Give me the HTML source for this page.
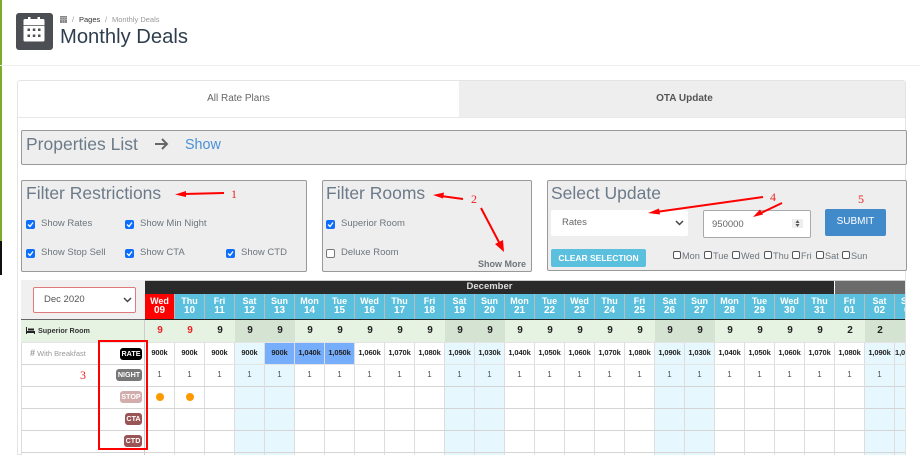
<!DOCTYPE html>
<html><head><meta charset="utf-8"><style>
*{box-sizing:border-box}
html,body{margin:0;padding:0;background:#fff;width:920px;height:455px;overflow:hidden}
#w{position:absolute;left:0;top:0;width:920px;height:455px;overflow:hidden;font-family:"Liberation Sans",sans-serif;color:#6c757d;filter:blur(.3px)}
.a{position:absolute}
.box{position:absolute;background:#eee;border:1px solid #999;border-radius:2px}
.h{position:absolute;font-size:17.5px;color:#6c7a89;white-space:nowrap;line-height:20px}
.l{position:absolute;font-size:9.5px;line-height:12px;color:#6c757d;white-space:nowrap}
.c{position:absolute;width:9px;height:9px;border-radius:2px;background:#0d6efd}
.c svg{position:absolute;left:0;top:0}
.u{position:absolute;width:9px;height:9px;border-radius:2px;background:#fff;border:1px solid #777}
.r{position:absolute;left:145px;width:760px;display:flex;overflow:hidden}
.r i{flex:0 0 30px;width:30px;font-style:normal;text-align:center;border-right:1px solid #ddd;white-space:nowrap;overflow:hidden}
.d i{height:25px;background:#5bc0de;color:#fff;font-weight:bold;font-size:9px;line-height:10px;padding-top:2px;border-right:1px solid #bbb}
.d b{display:block;font-size:10px}
.v i{height:22px;background:#e6f3e2;color:#222;font-weight:bold;font-size:10px;line-height:21px;border-right:0}
.v i.w{background:#d5e3d3}
.v i.e{color:#e22}
.t i{height:21px;background:#fff;color:#222;font-size:7.5px;font-weight:bold;line-height:20px;letter-spacing:-.1px}
.n i{height:22px;background:#fff;color:#555;font-size:8px;line-height:19px;border-bottom:1px solid #d4d4d4}
.t i.w,.n i.w{background:#e6f7fd}
.t i.p{background:#77aefb}
.f{position:absolute;left:21px;width:124px;height:22px;background:#fff;border-bottom:1px solid #d4d4d4;border-left:1px solid #ddd;border-right:1px solid #ccc}
.g{position:absolute;right:2px;font-size:7.2px;font-weight:bold;color:#fff;border-radius:3px;text-align:center;height:12px;line-height:12px}
.o{position:absolute;width:8px;height:8px;border-radius:50%;background:#f90}
.x{position:absolute;font-family:"Liberation Serif",serif;font-size:12px;color:#e22;line-height:14px}
</style></head><body><div id="w">
<div class="a" style="left:0;top:0;width:2px;height:241px;background:#7aad2a"></div>
<div class="a" style="left:0;top:241px;width:2px;height:34px;background:#111"></div>
<div class="a" style="left:0;top:65px;width:920px;height:1px;background:#eee"></div>

<div class="a" style="left:16px;top:13px;width:37px;height:37px;background:#4b4e52;border-radius:3px"></div>
<svg class="a" style="left:22px;top:16px" width="24" height="26" viewBox="0 0 24 26"><path fill="#fff" d="M6 1h2.500v3H6zM15.500 1H18v3h-2.500z"/><path fill="#fff" d="M3 3h18a1.500 1.500 0 0 1 1.500 1.500V24a1.500 1.500 0 0 1-1.500 1.500H3A1.500 1.500 0 0 1 1.500 24V4.500A1.500 1.500 0 0 1 3 3z"/><path fill="#4b4e52" d="M1.500 9h21v.7h-21z"/><path fill="#4b4e52" d="M5.500 12.500h2.500v2.500H5.500zM10.800 12.500h2.500v2.500h-2.500zM16 12.500h2.500v2.500H16zM5.500 18.500h2.500v2.500H5.500zM10.800 18.500h2.500v2.500h-2.500zM16 18.500h2.500v2.500H16z"/></svg>
<svg class="a" style="left:60px;top:15px" width="7" height="8" viewBox="0 0 7 8"><path fill="#888" d="M0 1h7v7H0z"/><path fill="#ccc" d="M0 2.500h7v.5H0zM0 4.500h7v.5H0zM2 3v5h.5V3zM4.500 3v5h.5V3z"/></svg>
<div class="l" style="left:72px;top:14px;font-size:7.5px;color:#999">/</div>
<div class="l" style="left:79px;top:14px;font-size:7.5px;color:#333">Pages</div>
<div class="l" style="left:105px;top:14px;font-size:7.5px;color:#999">/</div>
<div class="l" style="left:112px;top:14px;font-size:7.5px;color:#999">Monthly Deals</div>
<div class="a" style="left:60px;top:25px;font-size:20.2px;line-height:24px;color:#2f3e4e;white-space:nowrap">Monthly Deals</div>

<div class="a" style="left:17px;top:80px;width:889px;height:375px;background:#fff;border:1px solid #e4e4e4;border-radius:3px 3px 0 0"></div>
<div class="a" style="left:459px;top:81px;width:446px;height:36px;background:#eee"></div>
<div class="a" style="left:18px;top:117px;width:887px;height:1px;background:#e8e8e8"></div>
<div class="a" style="left:18px;top:81px;width:441px;height:36px;line-height:35px;text-align:center;font-size:10px;color:#666">All Rate Plans</div>
<div class="a" style="left:459px;top:81px;width:446px;height:36px;line-height:35px;text-align:center;font-size:10px;color:#555;font-weight:bold;padding-left:5px">OTA Update</div>

<div class="box" style="left:21px;top:130px;width:886px;height:35px"></div>
<div class="h" style="left:26px;top:134px">Properties List</div>
<svg class="a" style="left:154px;top:137px" width="15" height="14" viewBox="0 0 15 14"><path fill="none" stroke="#666" stroke-width="2" d="M1 7h12M8 2l5 5-5 5"/></svg>
<div class="a" style="left:185px;top:137px;font-size:14.3px;line-height:17px;color:#4a90d6">Show</div>

<div class="box" style="left:21px;top:180px;width:286px;height:92px"></div>
<div class="h" style="left:26px;top:183px">Filter Restrictions</div>
<div class="c" style="left:26px;top:220px"><svg width="9" height="9"><path d="M2 4.500l2 2 3-4" fill="none" stroke="#fff" stroke-width="1.300"/></svg></div>
<div class="l" style="left:41px;top:218px">Show Rates</div>
<div class="c" style="left:125px;top:220px"><svg width="9" height="9"><path d="M2 4.500l2 2 3-4" fill="none" stroke="#fff" stroke-width="1.300"/></svg></div>
<div class="l" style="left:140px;top:218px">Show Min Night</div>
<div class="c" style="left:26px;top:249px"><svg width="9" height="9"><path d="M2 4.500l2 2 3-4" fill="none" stroke="#fff" stroke-width="1.300"/></svg></div>
<div class="l" style="left:41px;top:247px">Show Stop Sell</div>
<div class="c" style="left:125px;top:249px"><svg width="9" height="9"><path d="M2 4.500l2 2 3-4" fill="none" stroke="#fff" stroke-width="1.300"/></svg></div>
<div class="l" style="left:140px;top:247px">Show CTA</div>
<div class="c" style="left:226px;top:249px"><svg width="9" height="9"><path d="M2 4.500l2 2 3-4" fill="none" stroke="#fff" stroke-width="1.300"/></svg></div>
<div class="l" style="left:241px;top:247px">Show CTD</div>

<div class="box" style="left:322px;top:180px;width:210px;height:92px"></div>
<div class="h" style="left:326px;top:183px">Filter Rooms</div>
<div class="c" style="left:326px;top:220px"><svg width="9" height="9"><path d="M2 4.500l2 2 3-4" fill="none" stroke="#fff" stroke-width="1.300"/></svg></div>
<div class="l" style="left:341px;top:218px">Superior Room</div>
<div class="u" style="left:326px;top:249px"></div>
<div class="l" style="left:341px;top:247px">Deluxe Room</div>
<div class="l" style="left:478px;top:258px;font-weight:bold;font-size:9px">Show More</div>

<div class="box" style="left:547px;top:180px;width:360px;height:91px"></div>
<div class="h" style="left:551px;top:183px">Select Update</div>
<div class="a" style="left:551px;top:210px;width:137px;height:26px;background:#fff;border-radius:2px;font-size:9.5px;line-height:26px;padding-left:11px;color:#666">Rates</div>
<svg class="a" style="left:675px;top:220px" width="9" height="6"><path d="M1 1l3.500 3.500L8 1" fill="none" stroke="#444" stroke-width="1.500"/></svg>
<div class="a" style="left:703px;top:210px;width:108px;height:28px;background:#fff;border:1px solid #aaa;border-radius:2px;font-size:9.5px;line-height:27px;padding-left:8px;color:#666">950000</div>
<div class="a" style="left:792px;top:219px;width:11px;height:9px;background:#eee"></div>
<svg class="a" style="left:795px;top:220px" width="5" height="7"><path d="M2.500 0l2 3H.5zM2.500 7l2-3H.5z" fill="#555"/></svg>
<div class="a" style="left:825px;top:209px;width:61px;height:27px;background:#428bca;border-radius:2px;color:#fff;font-size:10px;line-height:26px;text-align:center">SUBMIT</div>
<div class="a" style="left:551px;top:249px;width:95px;height:18px;background:#5bc0de;border-radius:2px;color:#fff;font-size:8.5px;font-weight:bold;line-height:18px;text-align:center">CLEAR SELECTION</div>
<div class="u" style="left:673px;top:251px;width:8px;height:8px;border-color:#555"></div><div class="l" style="left:682px;top:250px;font-size:9.2px">Mon</div>
<div class="u" style="left:704px;top:251px;width:8px;height:8px;border-color:#555"></div><div class="l" style="left:713px;top:250px;font-size:9.2px">Tue</div>
<div class="u" style="left:732px;top:251px;width:8px;height:8px;border-color:#555"></div><div class="l" style="left:741px;top:250px;font-size:9.2px">Wed</div>
<div class="u" style="left:764px;top:251px;width:8px;height:8px;border-color:#555"></div><div class="l" style="left:773px;top:250px;font-size:9.2px">Thu</div>
<div class="u" style="left:792px;top:251px;width:8px;height:8px;border-color:#555"></div><div class="l" style="left:801px;top:250px;font-size:9.2px">Fri</div>
<div class="u" style="left:816px;top:251px;width:8px;height:8px;border-color:#555"></div><div class="l" style="left:825px;top:250px;font-size:9.2px">Sat</div>
<div class="u" style="left:842px;top:251px;width:8px;height:8px;border-color:#555"></div><div class="l" style="left:851px;top:250px;font-size:9.2px">Sun</div>

<!-- grid -->
<div class="a" style="left:21px;top:280px;width:124px;height:39px;background:#f0f0f0"></div>
<div class="a" style="left:21px;top:319px;width:124px;height:1px;background:#666"></div>
<div class="a" style="left:33px;top:287px;width:103px;height:26px;background:#fff;border:1px solid #e07a7a;border-radius:2px;font-size:9.5px;line-height:24px;padding-left:10px;color:#555">Dec 2020</div>
<svg class="a" style="left:123px;top:297px" width="9" height="6"><path d="M1 1l3.500 3.500L8 1" fill="none" stroke="#444" stroke-width="1.500"/></svg>
<div class="a" style="left:145px;top:281px;width:689px;height:13px;background:#2a2a2a;color:#ddd;font-weight:bold;font-size:9.5px;line-height:12px;text-align:center">December</div>
<div class="a" style="left:835px;top:281px;width:70px;height:13px;background:#6b6b6b"></div>
<div class="a" style="left:145px;top:280px;width:760px;height:1px;background:#ccc"></div>

<div class="r d" style="top:294px"><i style="background:#f00">Wed<b>09</b></i><i>Thu<b>10</b></i><i>Fri<b>11</b></i><i>Sat<b>12</b></i><i>Sun<b>13</b></i><i>Mon<b>14</b></i><i>Tue<b>15</b></i><i>Wed<b>16</b></i><i>Thu<b>17</b></i><i>Fri<b>18</b></i><i>Sat<b>19</b></i><i>Sun<b>20</b></i><i>Mon<b>21</b></i><i>Tue<b>22</b></i><i>Wed<b>23</b></i><i>Thu<b>24</b></i><i>Fri<b>25</b></i><i>Sat<b>26</b></i><i>Sun<b>27</b></i><i>Mon<b>28</b></i><i>Tue<b>29</b></i><i>Wed<b>30</b></i><i>Thu<b>31</b></i><i>Fri<b>01</b></i><i>Sat<b>02</b></i><i>Sun<b>03</b></i></div>
<div class="a" style="left:145px;top:319px;width:760px;height:1px;background:#222"></div>

<div class="a" style="left:21px;top:320px;width:124px;height:22px;background:#e6f3e2;border-right:1px solid #ccc"></div>
<svg class="a" style="left:26px;top:327px" width="9" height="7"><path fill="#222" d="M0 0h1v4h8v3H8V6H1v1H0zM2 1.500h6V3.500H2z"/></svg>
<div class="a" style="left:38px;top:320px;font-size:7.2px;font-weight:bold;line-height:21px;color:#333">Superior Room</div>
<div class="r v" style="top:320px"><i class="e">9</i><i class="e">9</i><i>9</i><i class="w">9</i><i class="w">9</i><i>9</i><i>9</i><i>9</i><i>9</i><i>9</i><i class="w">9</i><i class="w">9</i><i>9</i><i>9</i><i>9</i><i>9</i><i>9</i><i class="w">9</i><i class="w">9</i><i>9</i><i>9</i><i>9</i><i>9</i><i>2</i><i class="w">2</i><i class="w"></i></div>
<div class="a" style="left:21px;top:342px;width:884px;height:1px;background:#e4e4e4"></div>

<div class="f" style="top:343px"><span class="a" style="left:8px;top:0;font-size:7.5px;line-height:21px;color:#999;white-space:nowrap"><b style="font-size:9px">#</b> With Breakfast</span><span class="g" style="top:5px;width:22px;background:#000">RATE</span></div>
<div class="f" style="top:365px"><span class="g" style="top:4px;width:26px;background:#777">NIGHT</span></div>
<div class="f" style="top:387px"><span class="g" style="top:4px;width:22px;background:#d3acac">STOP</span></div>
<div class="f" style="top:409px"><span class="g" style="top:4px;width:17px;background:#955">CTA</span></div>
<div class="f" style="top:431px"><span class="g" style="top:4px;width:18px;background:#955">CTD</span></div>
<div class="f" style="top:453px"></div>

<div class="r t" style="top:343px"><i>900k</i><i>900k</i><i>900k</i><i class="w">900k</i><i class="p">900k</i><i class="p">1,040k</i><i class="p">1,050k</i><i>1,060k</i><i>1,070k</i><i>1,080k</i><i class="w">1,090k</i><i class="w">1,030k</i><i>1,040k</i><i>1,050k</i><i>1,060k</i><i>1,070k</i><i>1,080k</i><i class="w">1,090k</i><i class="w">1,030k</i><i>1,040k</i><i>1,050k</i><i>1,060k</i><i>1,070k</i><i>1,080k</i><i class="w">1,090k</i><i class="w" style="text-align:left">1,060k</i></div>
<div class="a" style="left:145px;top:364px;width:760px;height:1px;background:#e4e4e4"></div>
<div class="r n" style="top:365px"><i>1</i><i>1</i><i>1</i><i class="w">1</i><i class="w">1</i><i>1</i><i>1</i><i>1</i><i>1</i><i>1</i><i class="w">1</i><i class="w">1</i><i>1</i><i>1</i><i>1</i><i>1</i><i>1</i><i class="w">1</i><i class="w">1</i><i>1</i><i>1</i><i>1</i><i>1</i><i>1</i><i class="w">1</i><i class="w"></i></div>
<div class="r n" style="top:387px"><i></i><i></i><i></i><i class="w"></i><i class="w"></i><i></i><i></i><i></i><i></i><i></i><i class="w"></i><i class="w"></i><i></i><i></i><i></i><i></i><i></i><i class="w"></i><i class="w"></i><i></i><i></i><i></i><i></i><i></i><i class="w"></i><i class="w"></i></div>
<div class="o a" style="left:156px;top:393px"></div><div class="o a" style="left:186px;top:393px"></div>
<div class="r n" style="top:409px"><i></i><i></i><i></i><i class="w"></i><i class="w"></i><i></i><i></i><i></i><i></i><i></i><i class="w"></i><i class="w"></i><i></i><i></i><i></i><i></i><i></i><i class="w"></i><i class="w"></i><i></i><i></i><i></i><i></i><i></i><i class="w"></i><i class="w"></i></div>
<div class="r n" style="top:431px"><i></i><i></i><i></i><i class="w"></i><i class="w"></i><i></i><i></i><i></i><i></i><i></i><i class="w"></i><i class="w"></i><i></i><i></i><i></i><i></i><i></i><i class="w"></i><i class="w"></i><i></i><i></i><i></i><i></i><i></i><i class="w"></i><i class="w"></i></div>
<div class="r n" style="top:453px"><i></i><i></i><i></i><i class="w"></i><i class="w"></i><i></i><i></i><i></i><i></i><i></i><i class="w"></i><i class="w"></i><i></i><i></i><i></i><i></i><i></i><i class="w"></i><i class="w"></i><i></i><i></i><i></i><i></i><i></i><i class="w"></i><i class="w"></i></div>

<!-- annotations -->
<div class="a" style="left:98px;top:340px;width:50px;height:110px;border:2px solid #f00"></div>
<svg class="a" style="left:0;top:0" width="920" height="455"><g fill="none" stroke="#f00" stroke-width="2"><path d="M224 193L184 194"/><path d="M463 199L441 196"/><path d="M481 208L501 246"/><path d="M763 197L656 212"/><path d="M782 203L759 214"/></g><g fill="#f00"><path d="M175 194.500L186 191L186 197z"/><path d="M433 195L444 192.500L443 198.500z"/><path d="M504 252L495 244L503 240z"/><path d="M648 213L659 208.500L660 214.500z"/><path d="M753 217L760 209.500L763 214.500z"/></g></svg>
<div class="x" style="left:231px;top:187px">1</div>
<div class="x" style="left:471px;top:192px">2</div>
<div class="x" style="left:80px;top:368px">3</div>
<div class="x" style="left:770px;top:190px">4</div>
<div class="x" style="left:858px;top:192px">5</div>
</div></body></html>
